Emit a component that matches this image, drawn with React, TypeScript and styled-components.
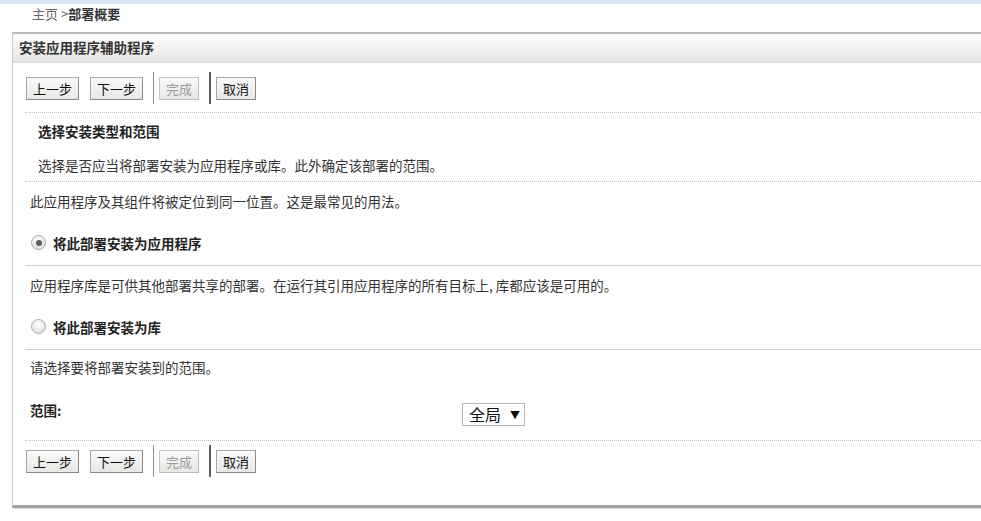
import React from 'react'
import styled, { createGlobalStyle } from 'styled-components'

const font = `"Noto Sans CJK SC", "Liberation Sans", sans-serif`

const GlobalStyle = createGlobalStyle`
  html { overflow: hidden; }
  html, body { margin: 0; padding: 0; background: #fff; }
  body { font-family: ${font}; font-size: 13.5px; color: #222; }
`

const TopBar = styled.div` height: 4px; background: #d5e4f6; `

const Crumbs = styled.div`
  height: 19px; padding: 0 0 9px 32px; display: flex; align-items: center;
  font-size: 13px; color: #666; line-height: 1;
  & b { color: #333; font-weight: bold; }
`

const Panel = styled.div`
  margin: 0 -30px 0 12px; border-left: 1px solid #c8c8c8; border-top: 2px solid #b8bbbb;
  border-bottom: 3px solid #a2a5a5; padding-bottom: 20px; background: #fff;
`

const PanelShadow = styled.div` margin: 0 -30px 0 13px; height: 1px; background: #d9dbdb; `

const Header = styled.div`
  height: 25px; padding: 0 0 3px 6px; display: flex; align-items: center;
  background: linear-gradient(#fefefe, #f6f6f5 30%, #e6e7e4);
  border-bottom: 1px solid #dcdcdc; font-weight: bold; color: #333;
`

const Body = styled.div` padding-left: 12px; `

const ButtonRow = styled.div<{ top: number }>`
  display: flex; align-items: center; height: 32px; padding-left: 1px;
  padding-top: ${p => p.top}px; padding-bottom: 8px;
`

const Btn = styled.button<{ disabled?: boolean }>`
  font-family: ${font}; font-size: 13px; height: 23px; padding: 0 6px; line-height: 1;
  border: 1px solid ${p => (p.disabled ? '#c5c5c5' : '#a9a9a9')};
  border-bottom-color: ${p => (p.disabled ? '#bbb' : '#888')};
  border-right-color: ${p => (p.disabled ? '#bbb' : '#888')};
  background: linear-gradient(#fafafa, #e7e7e4);
  color: ${p => (p.disabled ? '#9a9a9a' : '#111')};
  margin-right: 11px; border-radius: 0;
`

const Sep = styled.div<{ w: number; c: string }>`
  width: ${p => p.w}px; height: 32px; background: ${p => p.c}; margin: 0 5px 0 -1px;
`

const Dotted = styled.div` border-top: 1px dotted #bdbdbd; `
const Solid = styled.div` border-top: 1px solid #d0d0d0; `

const Heading = styled.div`
  padding-left: 13px; height: 35px; display: flex; align-items: center;
  font-weight: bold; color: #222;
`

const Desc = styled.div`
  padding-left: 13px; height: 33px; display: flex; align-items: center; color: #333;
`

const Text = styled.div<{ h: number }>`
  padding-left: 5px; height: ${p => p.h}px; display: flex; align-items: center; color: #333;
`

const RadioRow = styled.label`
  display: flex; align-items: center; gap: 7px; padding-left: 6px; height: 45px;
  font-weight: bold; color: #222;
`

const Radio = styled.span<{ checked?: boolean }>`
  width: 13px; height: 13px; border-radius: 50%; border: 1px solid #a9a9a9;
  background: radial-gradient(circle at 50% 35%, #fff, #d8d8d8);
  display: flex; align-items: center; justify-content: center;
  &::after {
    content: ''; width: 6px; height: 6px; border-radius: 50%;
    background: ${p => (p.checked ? '#5a5a5a' : 'transparent')};
  }
`

const ScopeRow = styled.div`
  display: grid; grid-template-columns: 432px auto; align-items: center;
  padding: 0 0 4px 5px; height: 52px;
`

const ScopeLabel = styled.span` font-weight: bold; color: #222; `

const Select = styled.div`
  width: 63px; height: 23px; box-sizing: border-box; border: 1px solid #b5b5b5;
  display: flex; align-items: center; gap: 9px; padding-left: 6px; margin-top: 8px;
  font-size: 16px; color: #111;
  & span { font-size: 10px; }
`

const Buttons = ({ top }: { top: number }) => (
  <ButtonRow top={top}>
    <Btn>上一步</Btn>
    <Btn>下一步</Btn>
    <Sep w={1} c="#8a8a8a" />
    <Btn disabled>完成</Btn>
    <Sep w={2} c="#5e5e5e" />
    <Btn>取消</Btn>
  </ButtonRow>
)

export default function App() {
  return (
    <>
      <GlobalStyle />
      <TopBar />
      <Crumbs>主页 &gt;<b>部署概要</b></Crumbs>
      <Panel>
        <Header>安装应用程序辅助程序</Header>
        <Body>
          <Buttons top={9} />
          <Dotted />
          <Heading>选择安装类型和范围</Heading>
          <Desc>选择是否应当将部署安装为应用程序或库。此外确定该部署的范围。</Desc>
          <Dotted />
          <Text h={38}>此应用程序及其组件将被定位到同一位置。这是最常见的用法。</Text>
          <RadioRow><Radio checked />将此部署安装为应用程序</RadioRow>
          <Solid />
          <Text h={38}>应用程序库是可供其他部署共享的部署。在运行其引用应用程序的所有目标上, 库都应该是可用的。</Text>
          <RadioRow><Radio />将此部署安装为库</RadioRow>
          <Solid />
          <Text h={34}>请选择要将部署安装到的范围。</Text>
          <ScopeRow>
            <ScopeLabel>范围:</ScopeLabel>
            <Select>全局<span>▼</span></Select>
          </ScopeRow>
          <Dotted />
          <Buttons top={4} />
        </Body>
      </Panel>
      <PanelShadow />
    </>
  )
}
